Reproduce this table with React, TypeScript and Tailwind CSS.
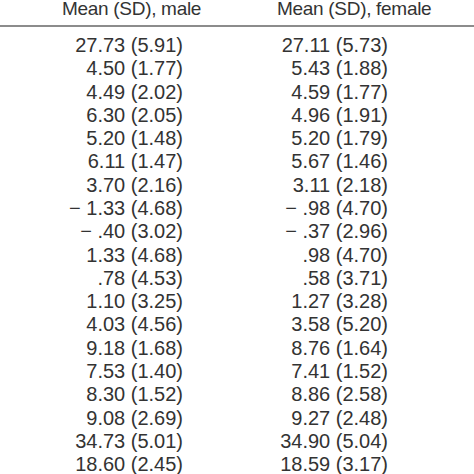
const rows: [string, string][] = [
  ["27.73 (5.91)", "27.11 (5.73)"],
  ["4.50 (1.77)", "5.43 (1.88)"],
  ["4.49 (2.02)", "4.59 (1.77)"],
  ["6.30 (2.05)", "4.96 (1.91)"],
  ["5.20 (1.48)", "5.20 (1.79)"],
  ["6.11 (1.47)", "5.67 (1.46)"],
  ["3.70 (2.16)", "3.11 (2.18)"],
  ["\u2212 1.33 (4.68)", "\u2212 .98 (4.70)"],
  ["\u2212 .40 (3.02)", "\u2212 .37 (2.96)"],
  ["1.33 (4.68)", ".98 (4.70)"],
  [".78 (4.53)", ".58 (3.71)"],
  ["1.10 (3.25)", "1.27 (3.28)"],
  ["4.03 (4.56)", "3.58 (5.20)"],
  ["9.18 (1.68)", "8.76 (1.64)"],
  ["7.53 (1.40)", "7.41 (1.52)"],
  ["8.30 (1.52)", "8.86 (2.58)"],
  ["9.08 (2.69)", "9.27 (2.48)"],
  ["34.73 (5.01)", "34.90 (5.04)"],
  ["18.60 (2.45)", "18.59 (3.17)"],
];

export default function App() {
  return (
    <div
      className="h-[474px] w-[474px] overflow-hidden bg-white text-[#333333]"
      style={{ fontFamily: '"Liberation Sans", Arial, sans-serif' }}
    >
      {/* header */}
      <div className="flex h-[27px] border-b-2 border-[#8c8c8c] text-[19px] leading-[18px] tracking-[-0.3px]">
        <span className="ml-[62px] w-[215px] whitespace-nowrap">Mean (SD), male</span>
        <span className="whitespace-nowrap">Mean (SD), female</span>
      </div>

      <div className="pt-[7px] text-[20px] leading-[23.28px]">
        {rows.map(([male, female], i) => (
          <div key={i} className="flex whitespace-nowrap">
            <span className="w-[183px] text-right">{male}</span>
            <span className="w-[205px] text-right">{female}</span>
          </div>
        ))}
      </div>
    </div>
  );
}
